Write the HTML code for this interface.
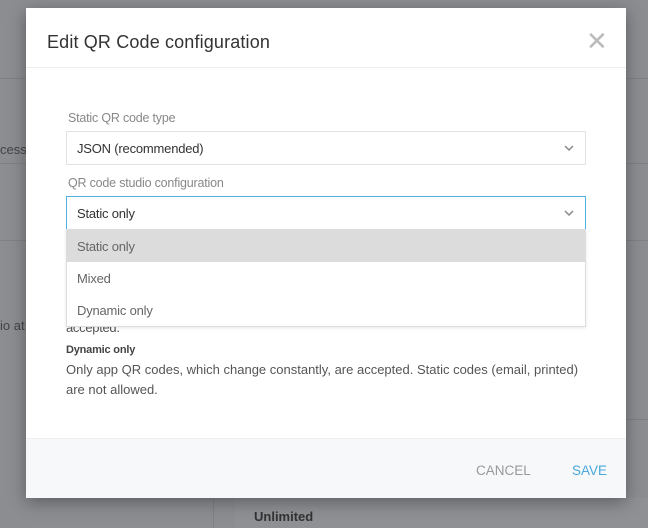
<!DOCTYPE html>
<html><head><style>
*{margin:0;padding:0;box-sizing:border-box}
body{width:648px;height:528px;background:#8b8d91;font-family:"Liberation Sans",sans-serif;position:relative;overflow:hidden}
.bgl{position:absolute;background:#7f8185;}
.m{position:absolute;left:26px;top:8px;width:600px;height:490px;background:#fff;box-shadow:0 4px 16px rgba(0,0,0,.35)}
.t{position:absolute;left:21px;top:24px;font-size:18px;color:#333;letter-spacing:0.15px}
.x{position:absolute;left:560px;top:18px;font-size:26px;color:#bbb}
.hl{position:absolute;left:0;top:59px;width:600px;height:1px;background:#eee}
.lab{position:absolute;left:42px;font-size:12.5px;color:#888;letter-spacing:-0.2px}
.sel{position:absolute;left:40px;width:520px;height:34px;border:1px solid #e3e3e3;font-size:13px;color:#333;padding:9px 0 0 10px;letter-spacing:-0.2px}
.chev{position:absolute;right:11px;top:13px}
.dd{position:absolute;left:40px;top:221px;width:520px;height:98px;background:#fff;border:1px solid #ddd;box-shadow:0 1px 3px rgba(0,0,0,.1)}
.o{height:32px;font-size:13px;color:#666;padding:9px 0 0 10px;letter-spacing:-0.2px}
.txt{position:absolute;left:40px;font-size:13px;color:#555;letter-spacing:-0.3px}
.f{position:absolute;left:0;top:430px;width:600px;height:60px;background:#f7f8f9;border-top:1px solid #eee}
.b{position:absolute;top:24px;font-size:13.5px;letter-spacing:0}
</style></head><body>
<div class="bgl" style="left:0;top:78px;width:30px;height:1px"></div>
<div class="bgl" style="left:0;top:163px;width:30px;height:1px"></div>
<div class="bgl" style="left:0;top:240px;width:30px;height:1px"></div>
<div class="bgl" style="left:620px;top:78px;width:28px;height:1px"></div>
<div class="bgl" style="left:620px;top:163px;width:28px;height:1px"></div>
<div class="bgl" style="left:620px;top:240px;width:28px;height:1px"></div>
<div class="bgl" style="left:620px;top:419px;width:28px;height:1px"></div>
<div class="bgl" style="left:213px;top:498px;width:1px;height:30px"></div>
<div style="position:absolute;left:235px;top:498px;width:413px;height:30px;background:#8e9094"></div>
<div style="position:absolute;left:0;top:142px;font-size:13px;color:#444">cess</div>
<div style="position:absolute;left:0;top:318px;font-size:13px;color:#444">io at</div>
<div style="position:absolute;left:254px;top:509px;font-size:13px;font-weight:bold;color:#333">Unlimited</div>
<div class="m">
<div class="t">Edit QR Code configuration</div>
<div class="x">✕</div>
<div class="hl"></div>
<div class="lab" style="top:103px">Static QR code type</div>
<div class="sel" style="top:123px">JSON (recommended)<svg class="chev" width="10" height="7" viewBox="0 0 10 7"><path d="M1 1l4 4 4-4" stroke="#888" stroke-width="1.5" fill="none"/></svg></div>
<div class="lab" style="top:168px">QR code studio configuration</div>
<div class="sel" style="top:188px;border-color:#4fb0e0">Static only<svg class="chev" width="10" height="7" viewBox="0 0 10 7"><path d="M1 1l4 4 4-4" stroke="#888" stroke-width="1.5" fill="none"/></svg></div>
<div class="txt" style="top:312px">accepted.</div>
<div class="dd">
<div class="o" style="background:#dcdcdc">Static only</div>
<div class="o">Mixed</div>
<div class="o">Dynamic only</div>
</div>
<div class="txt" style="top:336px;font-size:11px;font-weight:bold;color:#444;letter-spacing:-0.2px">Dynamic only</div>
<div class="txt" style="top:352px;line-height:20px;letter-spacing:0;white-space:nowrap">Only app QR codes, which change constantly, are accepted. Static codes (email, printed)<br>are not allowed.</div>
<div class="f">
<div class="b" style="left:450px;color:#999">CANCEL</div>
<div class="b" style="left:546px;color:#4aa8dc">SAVE</div>
</div>
</div>
</body></html>
